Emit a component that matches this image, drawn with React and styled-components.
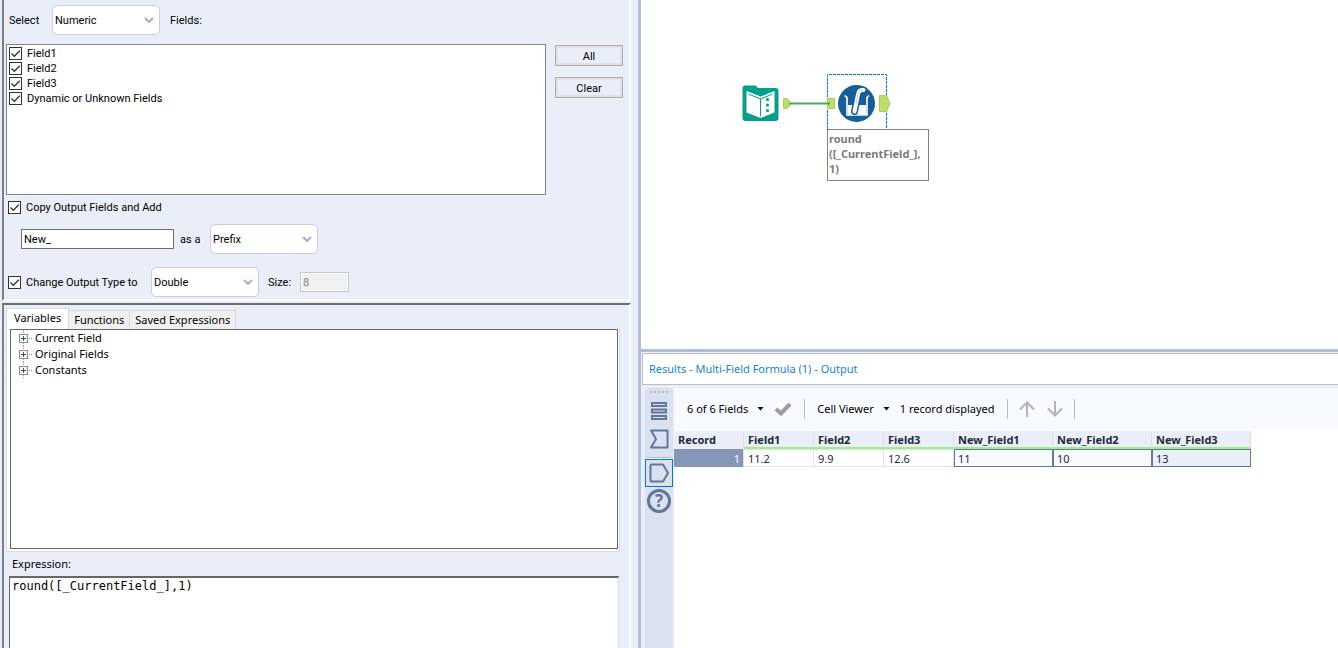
import { useState } from "react";
import styled, { createGlobalStyle } from "styled-components";

const GlobalStyle = createGlobalStyle`
  * {
    box-sizing: border-box;
  }

  body {
    margin: 0;
    background-color: #eaeef9;
    color: #000;
  }

  button, input, select, textarea {
    font: inherit;
    color: inherit;
    margin: 0;
  }
`;

const formFont = `Roboto, "Liberation Sans", sans-serif`;
const uiFont = `"Noto Sans", "Open Sans", sans-serif`;

const Layout = {
  Container: styled.div`
    display: grid;
    grid-template-columns: minmax(0, 641fr) minmax(0, 697fr);
    height: 100vh;
    overflow: hidden;
  `,
  Left: styled.section`
    display: flex;
    flex-direction: column;
    gap: 2px;
    min-height: 0;
    padding: 0 7px 0 2px;
    border-right: 3px solid #adbfe0;
  `,
  Right: styled.section`
    display: grid;
    grid-template-rows: minmax(0, 352fr) minmax(0, 296fr);
    min-height: 0;
  `,
};

const Config = styled.div`
  padding: 5px 6px 2px 3px;
  border-left: 2px solid #7b7f88;
  border-right: 2px solid #fff;
  border-bottom: 2px solid #fff;
  font: 11px/15px ${formFont};
`;

const Line = styled.div`
  display: flex;
  align-items: center;
  height: ${(props) => (props.$short ? 15 : 30)}px;
  gap: ${(props) => props.$gap || 9}px;
  margin-top: ${(props) => props.$top || 0}px;
  padding-left: ${(props) => props.$indent || 1}px;
`;

const Caption = styled.label`
  min-width: ${(props) => props.$width || 0}px;
  white-space: nowrap;
`;

const Drop = {
  Box: styled.div`
    display: grid;
    width: 108px;
    height: 30px;
    align-items: center;

    > * {
      grid-area: 1 / 1;
    }

    svg {
      justify-self: end;
      margin-right: 6px;
      pointer-events: none;
    }
  `,
  Select: styled.select`
    appearance: none;
    width: 100%;
    height: 100%;
    padding: 0 20px 0 2px;
    border: 1px solid #c3cfe8;
    border-radius: 5px;
    background-color: #fff;
  `,
};

const Tick = {
  Label: styled.label`
    display: flex;
    align-items: center;
    gap: 5px;
    min-width: 134px;
    height: 15px;
    white-space: nowrap;
  `,
  Box: styled.span`
    display: grid;

    > * {
      grid-area: 1 / 1;
    }

    svg {
      pointer-events: none;
    }

    input:not(:checked) + svg {
      visibility: hidden;
    }
  `,
  Input: styled.input`
    appearance: none;
    width: 13px;
    height: 13px;
    border: 1px solid #333;
    background-color: #fff;
  `,
};

const Fields = {
  Row: styled.div`
    display: flex;
    gap: 9px;
    margin: 9px 0 5px;
  `,
  List: styled.div`
    flex: 1;
    height: 151px;
    margin-left: -1px;
    padding: 1px 2px;
    border: 1px solid #7f848e;
    background-color: #fff;
  `,
  Buttons: styled.div`
    display: flex;
    flex-direction: column;
    gap: 11px;
    width: 68px;
    padding-top: 1px;
  `,
};

const Button = styled.button`
  height: 21px;
  padding: 1px 0 0;
  border: 1px solid #adadad;
  background-color: #eaeef9;
  box-shadow: inset 0 0 0 2px #e1e1e1;
  text-align: center;
`;

const TextBox = styled.input`
  width: ${(props) => props.$width}px;
  height: 20px;
  padding: 0 2px;
  border: 1px solid #6f6f6f;
  background-color: #fff;

  &:disabled {
    border-color: #c8c8c8;
    box-shadow: inset 0 0 0 1px #fff;
    background-color: #f0f0f0;
    color: #838383;
  }
`;

const Editor = styled.div`
  flex: 1;
  display: flex;
  flex-direction: column;
  min-height: 0;
  padding: 3px 9px 0 2px;
  border-top: 2px solid #6b6e73;
  border-left: 2px solid #7b7f88;
  border-right: 2px solid #fff;
  font: 11px/16px ${uiFont};
`;

const Tabs = styled.div`
  display: flex;
  align-items: flex-end;
`;

const Tab = styled.button`
  height: ${(props) => (props.$active ? 21 : 19)}px;
  padding: 0 ${(props) => (props.$active ? 7 : 5)}px ${(props) => (props.$active ? 2 : 0)}px;
  border: 1px solid #d9d9d9;
  border-left-width: ${(props) => (props.$active ? 1 : 0)}px;
  border-bottom: 0;
  background-color: ${(props) => (props.$active ? "#fff" : "#f0f0f0")};
  white-space: nowrap;
`;

const TabPanel = styled.div`
  flex: 218 1 0;
  min-height: 0;
  padding: 0 1px 2px 3px;
  border: 1px solid #dcdcdc;
  border-top: 0;
  background-color: #fff;
`;

const Tree = {
  List: styled.ul`
    height: 100%;
    margin: 0;
    padding: 0 0 0 8px;
    border: 1px solid #64676c;
    list-style: none;
  `,
  Item: styled.li`
    display: flex;
    align-items: center;
    height: 16px;
    gap: 3px;
  `,
};

const ExpressionLabel = styled.label`
  height: 24px;
  padding: 4px 0 0 6px;
`;

const Expression = styled.textarea`
  flex: 69 1 0;
  min-height: 0;
  margin: 0 1px 0 3px;
  padding: 0 2px;
  border: solid #64676c;
  border-width: 2px 0 0 1px;
  border-right: 1px solid #dcdcdc;
  outline: none;
  resize: none;
  background-color: #fff;
  font: 12px/16px "DejaVu Sans Mono", monospace;
`;

const Canvas = styled.div`
  position: relative;
  border-bottom: 3px solid #adbfe0;
  background-color: #fff;
`;

const Flow = styled.svg`
  position: absolute;
  left: 100px;
  top: 72px;
`;

const Annotation = styled.div`
  position: absolute;
  left: 186px;
  top: 129px;
  width: 102px;
  height: 52px;
  padding: 1px;
  border: 1px solid #808080;
  background-color: #fff;
  color: #7a7a7a;
  font: bold 11px/15px ${uiFont};
`;

const Results = {
  Container: styled.div`
    display: flex;
    flex-direction: column;
    min-height: 0;
    padding-top: 1px;
    font: 11px/16px ${uiFont};
  `,
  Title: styled.header`
    height: 32px;
    margin-left: 1px;
    padding: 7px 6px;
    border: 1px solid #c0c0c0;
    border-right: 0;
    background-color: #fff;
    color: #1583c7;
  `,
  Body: styled.div`
    flex: 1;
    display: flex;
    min-height: 0;
    padding: 3px 0 0 4px;
  `,
  Main: styled.div`
    flex: 1;
    min-width: 0;
    margin-left: 1px;
    background-color: #fff;
  `,
};

const Side = {
  Bar: styled.nav`
    display: flex;
    flex-direction: column;
    align-items: center;
    width: 28px;
    padding-top: 3px;
    border-radius: 4px 4px 0 0;
    background-color: #dae2ef;
    color: #62759a;
  `,
  Grip: styled.div`
    width: 18px;
    height: 2px;
    margin-bottom: 4px;
    background: repeating-linear-gradient(90deg, #b4b4b4 0 2px, transparent 2px 4px);
  `,
  Button: styled.button`
    display: grid;
    place-items: center;
    width: 28px;
    height: 28px;
    padding: 0;
    border: 1px solid ${(props) => (props.$active ? "#0078d7" : "transparent")};
    background: none;
  `,
  Line: styled.div`
    width: 24px;
    height: 2px;
    margin: 4px 0 0;
    border-top: 1px solid #b5bac4;
    background-color: #fff;
  `,
  Help: styled.span`
    width: 24px;
    height: 24px;
    border: 3px solid #62759a;
    border-radius: 50%;
    font: bold 17px/18px ${uiFont};
    text-align: center;
  `,
};

const Toolbar = {
  Bar: styled.div`
    display: flex;
    align-items: center;
    height: 42px;
    padding-left: 13px;
    background-color: #f7faff;
    white-space: nowrap;
  `,
  Button: styled.button`
    display: flex;
    align-items: center;
    gap: 9px;
    padding: 0;
    border: 0;
    background: none;
  `,
  Divider: styled.span`
    width: 1px;
    height: 20px;
    margin: 0 12px;
    background-color: #b9b9b9;
  `,
  Icons: styled.span`
    display: flex;
    gap: 10px;
    margin: 0 -2px;
  `,
  Item: styled.span`
    display: flex;
    margin-left: 10px;
  `,
};

const Table = styled.table`
  width: 577px;
  margin-top: 1px;
  border-collapse: separate;
  border-spacing: 0;
  table-layout: fixed;
  line-height: 15px;
  color: #222a38;
`;

const Th = styled.th`
  width: ${(props) => props.$width}px;
  height: 18px;
  padding: 0 0 0 4px;
  border-right: 1px solid #d7deec;
  border-bottom: 2px solid ${(props) => (props.$plain ? "#eaeef9" : "#98f57b")};
  background-color: #eaeef9;
  text-align: left;
`;

const Td = styled.td`
  height: 18px;
  padding: 0 0 0 4px;
  border: 1px solid #dde3ef;
  border-width: 1px 1px 1px 0;

  ${(props) => props.$added && `
    padding-left: 3px;
    border: 1px solid #687899;
    background-color: #f7faff;
  `}

  ${(props) => props.$current && `
    background-color: #eaeef9;
  `}
`;

const RecordCell = styled.th`
  height: 18px;
  padding: 0 3px 0 0;
  border-right: 1px solid #d7deec;
  background-color: #8597b9;
  color: #fff;
  font-weight: normal;
  text-align: right;
`;

const columns = [
  { name: "Field1", value: "11.2" },
  { name: "Field2", value: "9.9" },
  { name: "Field3", value: "12.6" },
  { name: "New_Field1", value: "11", added: true },
  { name: "New_Field2", value: "10", added: true },
  { name: "New_Field3", value: "13", added: true, current: true },
];

function Dropdown({ id, value, options }) {
  return (
    <Drop.Box>
      <Drop.Select id={id} defaultValue={value}>
        {options.map((item) => (
          <option key={item}>{item}</option>
        ))}
      </Drop.Select>
      <svg width="10" height="6" fill="none" stroke="#a0b0cc" strokeWidth="2">
        <path d="M1 1l4 4 4-4" />
      </svg>
    </Drop.Box>
  );
}

function Checkbox({ label }) {
  return (
    <Tick.Label>
      <Tick.Box>
        <Tick.Input type="checkbox" defaultChecked />
        <svg width="13" height="13" fill="none" stroke="#333" strokeWidth="1.3">
          <path d="M2.5 6.5l2.8 2.8 5.5-5.6" />
        </svg>
      </Tick.Box>
      {label}
    </Tick.Label>
  );
}

function Caret() {
  return (
    <svg width="7" height="4">
      <path d="M0.500 0h6l-3 3.500z" />
    </svg>
  );
}

function TreeToggle() {
  return (
    <svg width="13" height="16" fill="none">
      <path d="M4.5 0v3M4.5 13v3M10 8.5h3" stroke="#999" strokeDasharray="1 1" />
      <rect x="0.5" y="4.5" width="8" height="8" fill="#f7f7f7" stroke="#8f8f8f" />
      <path d="M2 8.5h5M4.5 6v5" stroke="#35508f" />
    </svg>
  );
}

function Workflow() {
  return (
    <Flow width="150" height="58" fill="none">
      {/* input tool */}
      <path d="M4 13.5h10.5l2.5 2.5h17.5q3 0 3 3V46q0 3-3 3H4.5q-3 0-3-3V16.5q0-3 2.5-3z" fill="#049e8d" />
      <path d="M5.5 19L19.5 24.5V46L5.5 40.5z" fill="#fff" />
      <path d="M19.5 24.5L33.5 19v21.5L19.5 46z" fill="#fff" />
      <path d="M7.5 22L19.5 27l12-5M19.5 27v17" stroke="#049e8d" strokeWidth="1" />
      <g fill="#049e8d">
        <circle cx="26.5" cy="27.5" r="1.6" />
        <circle cx="26.5" cy="33" r="1.6" />
        <circle cx="26.5" cy="38.5" r="1.6" />
      </g>

      {/* formula tool */}
      <circle cx="115.5" cy="31.5" r="18.5" fill="#165e98" />
      <path d="M107 33h18v9.5h-18z" fill="#fff" />
      <path d="M103.5 23.5l2.5 2v17.5h20V25.5l2-2" stroke="#fff" strokeWidth="1.6" />
      <path d="M122.5 18c-3.5-.5-5 1-5.5 4.5l-3.5 17" stroke="#165e98" strokeWidth="7" strokeLinecap="round" />
      <path d="M122.5 18c-3.5-.5-5 1-5.5 4.5l-3.5 17" stroke="#fff" strokeWidth="4" strokeLinecap="round" />
      <path d="M121.5 18.5c-3-.5-4 1-4.5 4l-2 9" stroke="#165e98" strokeOpacity="0.3" strokeLinecap="round" />

      {/* connection, selection and anchors */}
      <path d="M86.5 57V2.5h59V57" stroke="#0078d7" strokeDasharray="3 1" />
      <path d="M42.5 26.5h3.500l3 3v4l-3 3h-3.500z" fill="#b9df68" stroke="#a9cf5a" />
      <path d="M86.5 26.5h7v10h-7z" fill="#b9df68" stroke="#a9cf5a" />
      <path d="M48 31.5h41" stroke="#3fae5e" strokeWidth="2" />
      <path d="M138.5 23.5h7l3.5 8-3.5 8h-7z" fill="#b9df68" stroke="#a9cf5a" />
    </Flow>
  );
}

export default function App() {
  const [expression, setExpression] = useState("round([_CurrentField_],1)");

  return (
    <Layout.Container>
      <GlobalStyle />
      <Layout.Left>
        <Config>
          <Line $gap={10} $indent={2}>
            <Caption htmlFor="type" $width={33}>Select</Caption>
            <Dropdown id="type" value="Numeric" options={["Numeric", "Text"]} />
            <span>Fields:</span>
          </Line>
          <Fields.Row>
            <Fields.List>
              <Checkbox label="Field1" />
              <Checkbox label="Field2" />
              <Checkbox label="Field3" />
              <Checkbox label="Dynamic or Unknown Fields" />
            </Fields.List>
            <Fields.Buttons>
              <Button>All</Button>
              <Button>Clear</Button>
            </Fields.Buttons>
          </Fields.Row>
          <Line $short>
            <Checkbox label="Copy Output Fields and Add" />
          </Line>
          <Line $top={9} $gap={6} $indent={14}>
            <TextBox $width={153} defaultValue="New_" aria-label="Added text" />
            <Caption htmlFor="position" $width={24}>as a</Caption>
            <Dropdown id="position" value="Prefix" options={["Prefix", "Suffix"]} />
          </Line>
          <Line $top={13}>
            <Checkbox label="Change Output Type to" />
            <Dropdown id="output-type" value="Double" options={["Double", "Int32"]} />
            <Caption htmlFor="size">Size:</Caption>
            <TextBox id="size" $width={49} defaultValue="8" disabled />
          </Line>
        </Config>

        <Editor>
          <Tabs role="tablist">
            <Tab role="tab" $active>Variables</Tab>
            <Tab role="tab">Functions</Tab>
            <Tab role="tab">Saved Expressions</Tab>
          </Tabs>
          <TabPanel role="tabpanel">
            <Tree.List>
              {["Current Field", "Original Fields", "Constants"].map((item) => (
                <Tree.Item key={item}>
                  <TreeToggle />
                  {item}
                </Tree.Item>
              ))}
            </Tree.List>
          </TabPanel>
          <ExpressionLabel htmlFor="expression">Expression:</ExpressionLabel>
          <Expression
            id="expression"
            spellCheck={false}
            value={expression}
            onChange={(event) => setExpression(event.target.value)}
          />
        </Editor>
      </Layout.Left>

      <Layout.Right>
        <Canvas>
          <Workflow />
          <Annotation>
            round<br />([_CurrentField_],<br />1)
          </Annotation>
        </Canvas>

        <Results.Container>
          <Results.Title>Results - Multi-Field Formula (1) - Output</Results.Title>
          <Results.Body>
            <Side.Bar>
              <Side.Grip />
              <Side.Button aria-label="All messages">
                <svg width="18" height="20" fill="none" stroke="currentColor" strokeWidth="2">
                  <path d="M2 2h14v3H2zM2 8.5h14v3H2zM2 15h14v3H2z" />
                </svg>
              </Side.Button>
              <Side.Button aria-label="Input anchor">
                <svg width="20" height="20" fill="none" stroke="currentColor" strokeWidth="2" strokeLinejoin="round">
                  <path d="M2 1.5h16.5v17H2l5-8.5z" />
                </svg>
              </Side.Button>
              <Side.Line />
              <Side.Button aria-label="Output anchor" $active>
                <svg width="20" height="20" fill="none" stroke="currentColor" strokeWidth="2" strokeLinejoin="round">
                  <path d="M2.5 1.5h11.5l5 8.5-5 8.5H2.5q-1 0-1-1v-15q0-1 1-1z" />
                </svg>
              </Side.Button>
              <Side.Button aria-label="Help">
                <Side.Help>?</Side.Help>
              </Side.Button>
            </Side.Bar>
            <Results.Main>
              <Toolbar.Bar>
                <Toolbar.Button>
                  6 of 6 Fields
                  <Caret />
                </Toolbar.Button>
                <Toolbar.Item>
                  <svg width="18" height="14" fill="none" stroke="#9c9c9c" strokeWidth="4">
                    <path d="M2 7l5 4.5L16 2" />
                  </svg>
                </Toolbar.Item>
                <Toolbar.Divider />
                <Toolbar.Button>
                  Cell Viewer
                  <Caret />
                </Toolbar.Button>
                <Toolbar.Item>1 record displayed</Toolbar.Item>
                <Toolbar.Divider />
                <Toolbar.Icons>
                  <svg width="18" height="18" fill="none" stroke="#b4b4b4" strokeWidth="2">
                    <path d="M9 17V3M2 9.5l7-7 7 7" />
                  </svg>
                  <svg width="18" height="18" fill="none" stroke="#b4b4b4" strokeWidth="2">
                    <path d="M9 1v14M2 8.5l7 7 7-7" />
                  </svg>
                </Toolbar.Icons>
                <Toolbar.Divider />
              </Toolbar.Bar>
              <Table>
                <thead>
                  <tr>
                    <Th $width={70} $plain>Record</Th>
                    {columns.map((item) => (
                      <Th key={item.name} $width={item.added ? 99 : 70}>{item.name}</Th>
                    ))}
                  </tr>
                </thead>
                <tbody>
                  <tr>
                    <RecordCell scope="row">1</RecordCell>
                    {columns.map((item) => (
                      <Td key={item.name} $added={item.added} $current={item.current}>
                        {item.value}
                      </Td>
                    ))}
                  </tr>
                </tbody>
              </Table>
            </Results.Main>
          </Results.Body>
        </Results.Container>
      </Layout.Right>
    </Layout.Container>
  );
}
